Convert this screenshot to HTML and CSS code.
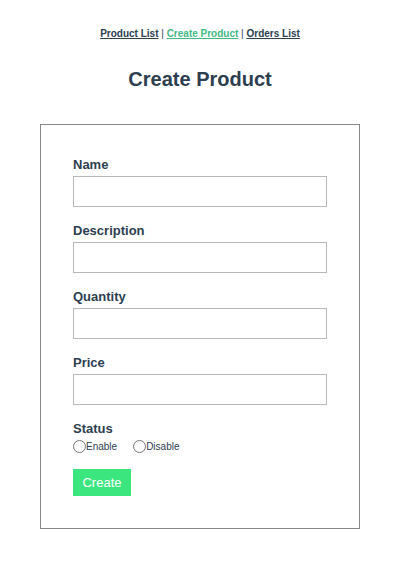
FILE: index.html
```html
<!DOCTYPE html>
<html lang="en">
<head>
<meta charset="utf-8">
<title>Create Product</title>
<link rel="stylesheet" href="styles.css">
</head>
<body>
<div class="app">
  <nav class="nav">
    <a href="#" class="nav-link">Product List</a> | <a href="#" class="nav-link active">Create Product</a> | <a href="#" class="nav-link">Orders List</a>
  </nav>
  <h1 class="title">Create Product</h1>
  <form class="card">
    <div class="field">
      <label class="label" for="name">Name</label>
      <input class="input" id="name" type="text">
    </div>
    <div class="field">
      <label class="label" for="desc">Description</label>
      <input class="input" id="desc" type="text">
    </div>
    <div class="field">
      <label class="label" for="qty">Quantity</label>
      <input class="input" id="qty" type="text">
    </div>
    <div class="field">
      <label class="label" for="price">Price</label>
      <input class="input" id="price" type="text">
    </div>
    <div class="field">
      <div class="label">Status</div>
      <div class="radios">
        <label class="radio"><input type="radio" name="status" class="radio-input">Enable</label>
        <label class="radio"><input type="radio" name="status" class="radio-input">Disable</label>
      </div>
    </div>
    <button type="button" class="btn">Create</button>
  </form>
</div>
</body>
</html>
```
FILE: styles.css
```css
html, body {
  margin: 0;
  padding: 0;
  background: #fff;
}
body {
  font-family: "Liberation Sans", Arial, sans-serif;
  color: #2c3e50;
}
.app {
  width: 400px;
}
.nav {
  padding-top: 28px;
  text-align: center;
  font-size: 10px;
  line-height: 12px;
}
.nav-link {
  color: #2c3e50;
  font-weight: bold;
  text-decoration: underline;
}
.nav-link.active {
  color: #42b983;
}
.title {
  margin: 28px 0 0;
  text-align: center;
  font-size: 20px;
  line-height: 23px;
  font-weight: bold;
}
.card {
  box-sizing: border-box;
  width: 320px;
  margin: 33px auto 0;
  border: 1px solid #888;
  padding: 32px;
}
.field {
  margin-bottom: 16px;
}
.label {
  display: block;
  font-size: 13px;
  line-height: 15px;
  font-weight: bold;
  margin-bottom: 4px;
  color: #2c3e50;
}
.input {
  display: block;
  box-sizing: border-box;
  width: 100%;
  height: 31px;
  margin: 0;
  border: 1px solid #b8b8b8;
  padding: 4px 8px;
  font-family: inherit;
  font-size: 13px;
  outline: none;
}
.radios {
  display: flex;
  gap: 16px;
  margin-top: 3px;
}
.radio {
  display: flex;
  align-items: center;
  font-size: 10px;
  line-height: 13px;
  color: #2c3e50;
}
.radio-input {
  width: 13px;
  height: 13px;
  margin: 0;
}
.btn {
  display: block;
  box-sizing: border-box;
  width: 58px;
  height: 27px;
  padding: 0;
  border: none;
  background: #3ce67f;
  color: #fff;
  font-family: inherit;
  font-size: 13px;
  text-align: center;
  cursor: pointer;
}
```
